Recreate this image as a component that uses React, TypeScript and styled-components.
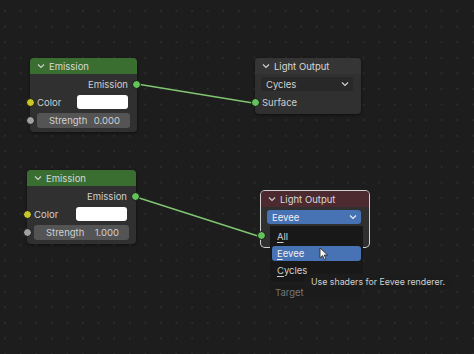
import styled, { createGlobalStyle } from 'styled-components'

const GlobalStyle = createGlobalStyle`
	html, body {
		margin: 0;
		padding: 0;
		background: #1d1d1d;
	}
	body {
		font-family: 'Inter', 'DejaVu Sans', sans-serif;
		font-size: 9.5px;
		color: #cfcfcf;
	}
`

type Point = { x: number; y: number }

const links: [Point, Point][] = [
	[{ x: 137, y: 84 }, { x: 253, y: 103 }],
	[{ x: 136, y: 197 }, { x: 261, y: 237 }],
]

const Chevron = ({ color = '#cfcfcf' }: { color?: string }) => (
	<svg width="8" height="6" viewBox="0 0 8 6">
		<polyline points="1,1.5 4,4.5 7,1.5" fill="none" stroke={color} strokeWidth="1.2" />
	</svg>
)

const App = () => {
	return (
		<>
			<GlobalStyle />
			<Canvas>
				<Links width="474" height="354">
					{links.map(([a, b], i) => (
						<line key={i} x1={a.x} y1={a.y} x2={b.x} y2={b.y} stroke="#80c672" strokeWidth="1.5" />
					))}
				</Links>

				<Node left={30} top={58} width={107}>
					<Header tint="green">
						<Chevron />
						Emission
					</Header>
					<Body>
						<Row align="right">
							Emission
							<Socket side="right" color="#63c35a" />
						</Row>
						<Row>
							<Socket side="left" color="#c7c729" />
							<Label>Color</Label>
							<Swatch />
						</Row>
						<Row>
							<Socket side="left" color="#a1a1a1" />
							<Slider>
								<span>Strength</span>
								<span>0.000</span>
							</Slider>
						</Row>
					</Body>
				</Node>

				<Node left={255} top={58} width={106}>
					<Header tint="gray">
						<Chevron />
						Light Output
					</Header>
					<Body>
						<Row>
							<Dropdown>
								Cycles
								<Chevron />
							</Dropdown>
						</Row>
						<Row>
							<Socket side="left" color="#63c35a" />
							<Label>Surface</Label>
						</Row>
					</Body>
				</Node>

				<Node left={27} top={170} width={109}>
					<Header tint="green">
						<Chevron />
						Emission
					</Header>
					<Body>
						<Row align="right">
							Emission
							<Socket side="right" color="#63c35a" />
						</Row>
						<Row>
							<Socket side="left" color="#c7c729" />
							<Label>Color</Label>
							<Swatch />
						</Row>
						<Row>
							<Socket side="left" color="#a1a1a1" />
							<Slider>
								<span>Strength</span>
								<span>1.000</span>
							</Slider>
						</Row>
					</Body>
				</Node>

				<Node left={261} top={191} width={108} selected>
					<Header tint="red">
						<Chevron />
						Light Output
					</Header>
					<Body>
						<Row>
							<Dropdown active>
								Eevee
								<Chevron color="#e8eef8" />
							</Dropdown>
						</Row>
						<Row>
							<Socket side="left" color="#63c35a" />
						</Row>
					</Body>
				</Node>

				<Menu>
					<MenuItem>
						<u>A</u>ll
					</MenuItem>
					<MenuItem active>
						<u>E</u>evee
					</MenuItem>
					<MenuItem>
						<u>C</u>ycles
					</MenuItem>
				</Menu>

				<TargetField>Target</TargetField>

				<Tooltip>Use shaders for Eevee renderer.</Tooltip>

				<Cursor width="10" height="14" viewBox="0 0 10 14">
					<path d="M1 1 L1 11 L3.5 8.6 L5.4 12.6 L7 11.9 L5.2 8 L8.6 8 Z" fill="#f4f4f4" stroke="#222" strokeWidth="0.8" />
				</Cursor>
			</Canvas>
		</>
	)
}

export default App

const Canvas = styled.div`
	position: relative;
	width: 474px;
	height: 354px;
	overflow: hidden;
	background-color: #1d1d1d;
	background-image: radial-gradient(circle, #2b2b2b 0.9px, transparent 1.2px);
	background-size: 15.6px 15.6px;
	background-position: -2.8px 3.2px;
`

const Links = styled.svg`
	position: absolute;
	left: 0;
	top: 0;
`

const Node = styled.div<{ left: number; top: number; width: number; selected?: boolean }>`
	position: absolute;
	left: ${(p) => p.left}px;
	top: ${(p) => p.top}px;
	width: ${(p) => p.width}px;
	background: #303030;
	border-radius: 4px;
	box-shadow: ${(p) => (p.selected ? '0 0 0 1px #d0d0d0' : '0 1px 3px rgba(0, 0, 0, 0.5)')};
`

const headerColors = {
	green: '#3a6e30',
	gray: '#353535',
	red: '#4d2a2f',
}

const Header = styled.div<{ tint: keyof typeof headerColors }>`
	height: 16px;
	display: flex;
	align-items: center;
	gap: 4px;
	padding-left: 7px;
	background: ${(p) => headerColors[p.tint]};
	border-radius: 4px 4px 0 0;
	color: #d8d8d8;
`

const Body = styled.div`
	padding: 1px 0 3px;
`

const Row = styled.div<{ align?: 'left' | 'right' }>`
	position: relative;
	height: 18px;
	display: flex;
	align-items: center;
	justify-content: ${(p) => (p.align === 'right' ? 'flex-end' : 'flex-start')};
	padding: 0 9px 0 7px;
	gap: 6px;
`

const Socket = styled.span<{ side: 'left' | 'right'; color: string }>`
	position: absolute;
	top: 50%;
	${(p) => p.side}: -4px;
	width: 7px;
	height: 7px;
	margin-top: -4px;
	border-radius: 50%;
	background: ${(p) => p.color};
	border: 0.5px solid #111;
`

const Label = styled.span`
	flex: 1;
`

const Swatch = styled.span`
	width: 51px;
	height: 14px;
	background: #fff;
	border-radius: 3px;
`

const Slider = styled.div`
	flex: 1;
	height: 15px;
	display: flex;
	align-items: center;
	justify-content: space-between;
	padding: 0 10px 0 12px;
	background: #545454;
	border-radius: 3px;
	color: #d0d0d0;
	margin-right: -2px;
`

const Dropdown = styled.div<{ active?: boolean }>`
	flex: 1;
	height: 14px;
	display: flex;
	align-items: center;
	justify-content: space-between;
	padding: 0 4px 0 5px;
	background: ${(p) => (p.active ? '#4772b3' : '#282828')};
	border-radius: 3px;
	color: ${(p) => (p.active ? '#eeeeee' : '#cfcfcf')};
	margin: 0 -1px 0 -1px;
`

const Menu = styled.div`
	position: absolute;
	left: 270px;
	top: 226px;
	width: 93px;
	padding: 3px 0 4px;
	background: #181818;
	border-radius: 0 0 3px 3px;
	display: flex;
	flex-direction: column;
	gap: 2px;
`

const MenuItem = styled.div<{ active?: boolean }>`
	height: 15px;
	display: flex;
	align-items: center;
	margin: 0 2px;
	padding-left: 5px;
	border-radius: 3px;
	background: ${(p) => (p.active ? '#4772b3' : 'transparent')};
	color: ${(p) => (p.active ? '#eeeeee' : '#cfcfcf')};

	u {
		text-decoration-thickness: 1px;
		text-underline-offset: 2px;
	}
`

const TargetField = styled.div`
	position: absolute;
	left: 270px;
	top: 284px;
	width: 86px;
	height: 16px;
	padding-left: 5px;
	display: flex;
	align-items: center;
	background: #1b1b1b;
	color: #767676;
`

const Tooltip = styled.div`
	position: absolute;
	left: 305px;
	top: 274px;
	padding: 2px 6px;
	background: #1c1c1c;
	color: #d0d0d0;
	font-size: 8.8px;
`

const Cursor = styled.svg`
	position: absolute;
	left: 319px;
	top: 247px;
`
